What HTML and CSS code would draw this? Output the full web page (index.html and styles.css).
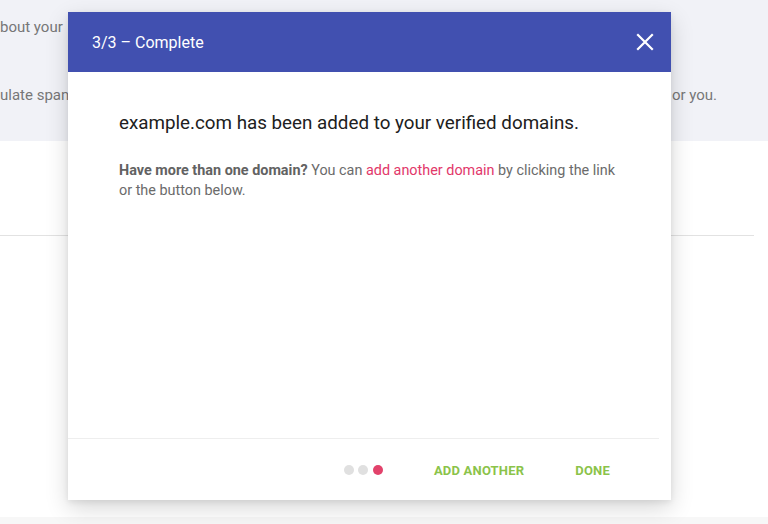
FILE: index.html
```html
<!DOCTYPE html>
<html lang="en">
<head>
<meta charset="utf-8">
<title>Verify domain</title>
<link rel="stylesheet" href="styles.css">
</head>
<body>
<div class="page">
  <section class="intro">
    <p class="intro-line">bout your&nbsp;&nbsp;&nbsp;&nbsp;&nbsp;&nbsp;&nbsp;domains and how we use them to protect your mail.</p>
    <div class="intro-row">
      <span>ulate span&nbsp;&nbsp;&nbsp;&nbsp;&nbsp;&nbsp;checks and deliverability reports</span>
      <span>or you.</span>
    </div>
  </section>
  <section class="content">
    <div class="rule"></div>
  </section>
  <footer class="page-foot"></footer>
</div>

<div class="modal" role="dialog" aria-labelledby="modal-title">
  <header class="modal-head">
    <h2 id="modal-title" class="modal-title">3/3 – Complete</h2>
    <button class="close" aria-label="Close">
      <svg width="18" height="18" viewBox="0 0 18 18"><path d="M2 2 L16 16 M16 2 L2 16" stroke="#fff" stroke-width="2.2" stroke-linecap="square" fill="none"/></svg>
    </button>
  </header>
  <div class="modal-body">
    <h3 class="headline">example.com has been added to your verified domains.</h3>
    <p class="desc"><strong>Have more than one domain?</strong> You can <a href="#" class="link">add another domain</a> by clicking the link or the button below.</p>
  </div>
  <div class="modal-foot">
    <div class="dots">
      <span class="dot"></span><span class="dot"></span><span class="dot active"></span>
    </div>
    <button class="btn">ADD ANOTHER</button>
    <button class="btn">DONE</button>
  </div>
</div>
</body>
</html>
```

FILE: styles.css
```css
* { box-sizing: border-box; }
html, body { margin: 0; padding: 0; }
body {
  font-family: Roboto, "Liberation Sans", Arial, sans-serif;
  background: #fff;
  width: 768px;
  height: 524px;
  overflow: hidden;
}
.page {
  display: flex;
  flex-direction: column;
  height: 524px;
}
.intro {
  background: #f1f2f7;
  height: 141px;
  color: #777;
  font-size: 15px;
  padding-top: 16px;
}
.intro-line {
  margin: 0;
  line-height: 22px;
  white-space: nowrap;
}
.intro-row {
  margin-top: 46px;
  display: flex;
  justify-content: space-between;
  line-height: 22px;
  padding-right: 51px;
  white-space: nowrap;
}
.content {
  flex: 1;
  padding-top: 94px;
}
.rule {
  height: 1px;
  background: #e2e2e2;
  width: 754px;
}
.page-foot {
  height: 7px;
  background: #f7f7f7;
}

.modal {
  position: absolute;
  left: 68px;
  top: 12px;
  width: 603px;
  height: 488px;
  background: #fff;
  box-shadow: 0 8px 22px rgba(0,0,0,0.16), 0 2px 6px rgba(0,0,0,0.08);
  display: flex;
  flex-direction: column;
}
.modal-head {
  height: 60px;
  background: #4150b0;
  display: flex;
  align-items: center;
  justify-content: space-between;
  padding: 0 17px 0 24px;
}
.modal-title {
  margin: 0;
  color: #fff;
  font-size: 16px;
  font-weight: 400;
}
.close {
  background: none;
  border: 0;
  padding: 0;
  width: 18px;
  height: 18px;
  display: flex;
}
.modal-body {
  flex: 1;
  padding: 39px 40px 0 51px;
  border-bottom: 1px solid #eeeeee;
  margin-right: 12px;
}
.headline {
  margin: 0;
  font-size: 18.8px;
  font-weight: 400;
  color: #202020;
  line-height: 24px;
}
.desc {
  margin: 26px 0 0;
  font-size: 14.4px;
  line-height: 20px;
  color: #6b6b6b;
  max-width: 505px;
}
.desc strong { font-weight: 700; color: #626262; }
.link { color: #e2386a; text-decoration: none; }
.modal-foot {
  height: 61px;
  display: flex;
  align-items: center;
  justify-content: flex-end;
  padding-right: 61px;
  padding-top: 1px;
  gap: 51px;
}
.dots {
  display: flex;
  gap: 4.5px;
}
.dot {
  width: 10px;
  height: 10px;
  border-radius: 50%;
  background: #e0e0e0;
}
.dot.active { background: #e2426b; }
.btn {
  background: none;
  border: 0;
  padding: 0;
  font-family: inherit;
  font-size: 13px;
  font-weight: 700;
  color: #8bc34a;
  letter-spacing: 0.2px;
}
```
